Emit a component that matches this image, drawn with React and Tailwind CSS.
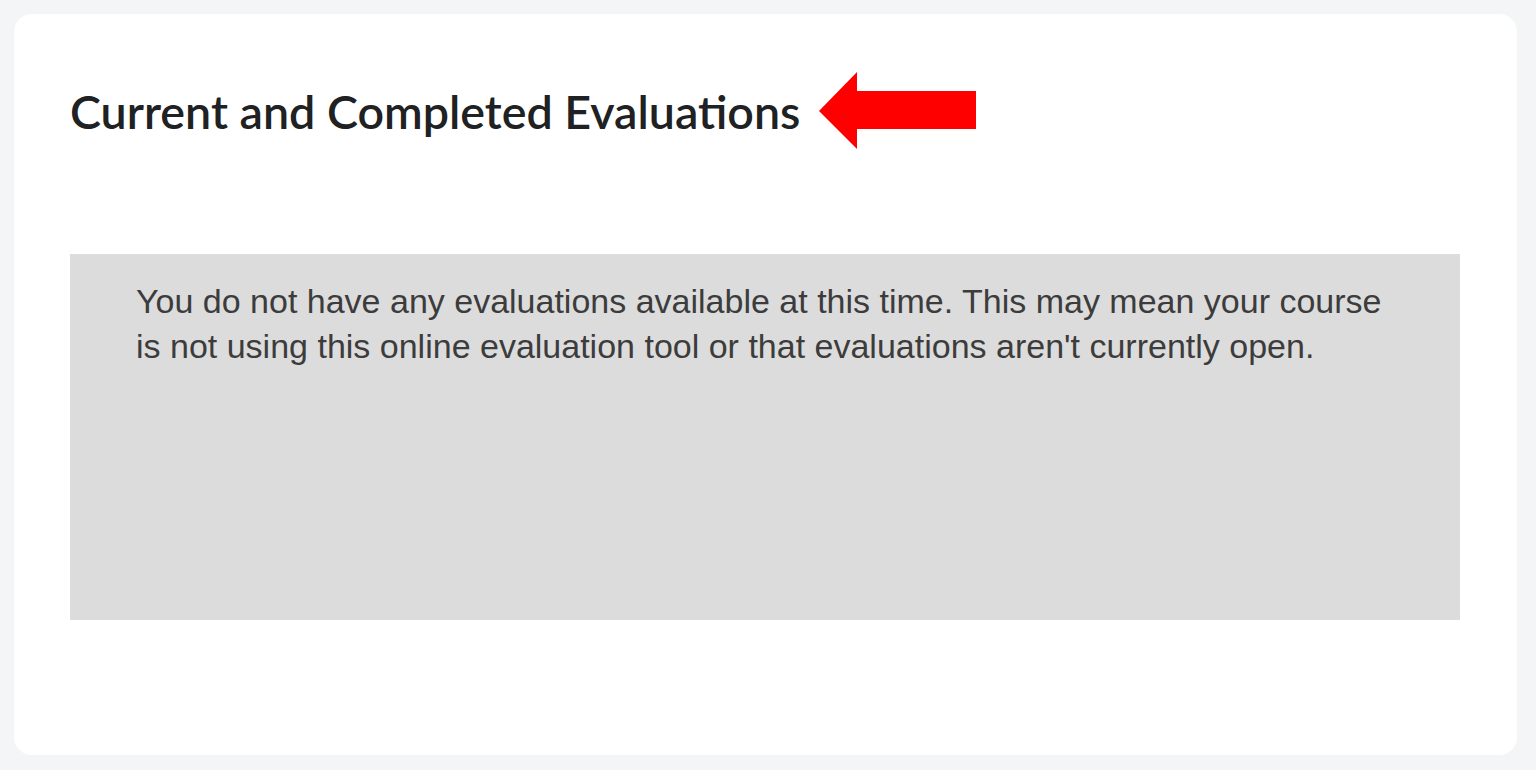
export default function App() {
  return (
    <div className="w-[1536px] h-[770px] bg-[#f4f5f7] pt-[14px] pl-[14px] pr-[19px] pb-[15px] overflow-hidden">
      <div className="h-[741px] bg-white rounded-[18px] pt-[67px] pl-[56px] pr-[57px]">
        <div className="flex items-center h-[60px]">
          <h1 className="text-[46.6px] leading-[60px] font-semibold text-[#202122]" style={{ fontFamily: "Lato, sans-serif" }}>
            Current and Completed Evaluations
          </h1>
          <svg className="ml-[19px]" width="158" height="78" viewBox="0 0 158 78">
            <polygon points="0,39 38,0 38,19 157,19 157,57 38,57 38,77" fill="#ff0000" />
          </svg>
        </div>
        <div className="mt-[113px] h-[366px] bg-[#dcdcdc] pl-[66px] pr-[40px] pt-[25px]">
          <p className="text-[34px] leading-[45px] text-[#3c3c3c] whitespace-nowrap" style={{ fontFamily: "'Liberation Sans', Arial, sans-serif" }}>
            You do not have any evaluations available at this time. This may mean your course
            <br />
            is not using this online evaluation tool or that evaluations aren't currently open.
          </p>
        </div>
      </div>
    </div>
  );
}
